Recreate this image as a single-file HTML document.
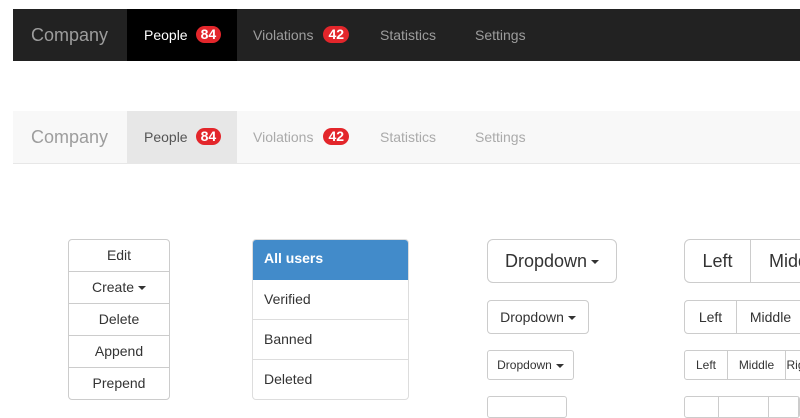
<!DOCTYPE html>
<html><head><style>
*{box-sizing:border-box;margin:0;padding:0}
body{width:800px;height:400px;overflow:hidden;background:#fff;font-family:"Liberation Sans",Arial,sans-serif;position:relative;color:#333}
.nav{position:absolute;left:13px;width:800px;height:52px}
.nav span{position:absolute;top:0;height:52px;line-height:52px;font-size:14px}
.brand{font-size:18px!important}
.badge{display:inline-block;background:#e3262b;color:#fff;font-size:12px;font-weight:bold;border-radius:10px;height:17px;line-height:17px;padding:0 5px;vertical-align:1px;margin-left:8px}
.b{position:absolute;border:1px solid #ccc;border-radius:4px;background:#fff;color:#333;text-align:center;white-space:nowrap}
.caret{display:inline-block;width:0;height:0;border-left:4px solid transparent;border-right:4px solid transparent;border-top:4px solid #333;vertical-align:middle;margin-left:4px}
.vg div{height:32px;line-height:31px;font-size:14px;text-align:center;border-bottom:1px solid #ccc}
.lg div{height:40px;line-height:39px;font-size:14px;padding-left:11px;border-bottom:1px solid #ddd}
.grp{position:absolute;border:1px solid #ccc;border-radius:4px;display:flex;overflow:hidden}
.grp div{border-right:1px solid #ccc;text-align:center}
</style></head><body>
<div class="nav" style="top:9px;background:#222">
<span class="brand" style="left:18px;color:#9d9d9d">Company</span>
<span style="left:114px;width:110px;background:#000;color:#fff;padding-left:17px">People<span class="badge" style="position:static;line-height:17px;height:17px">84</span></span>
<span style="left:240px;color:#9d9d9d">Violations<span class="badge" style="position:static;line-height:17px;height:17px;margin-left:10px">42</span></span>
<span style="left:367px;color:#9d9d9d">Statistics</span>
<span style="left:462px;color:#9d9d9d">Settings</span>
</div>
<div class="nav" style="top:111px;background:#f8f8f8;border-bottom:1px solid #e7e7e7;height:53px">
<span class="brand" style="left:18px;color:#9d9d9d">Company</span>
<span style="left:114px;width:110px;background:#e7e7e7;color:#555;padding-left:17px">People<span class="badge" style="position:static;line-height:17px;height:17px">84</span></span>
<span style="left:240px;color:#aaa">Violations<span class="badge" style="position:static;line-height:17px;height:17px;margin-left:10px">42</span></span>
<span style="left:367px;color:#aaa">Statistics</span>
<span style="left:462px;color:#aaa">Settings</span>
</div>
<div class="b vg" style="left:68px;top:239px;width:102px;height:161px;overflow:hidden;text-align:center">
<div>Edit</div><div>Create<span class="caret"></span></div><div>Delete</div><div>Append</div><div style="border:0">Prepend</div></div>
<div class="b lg" style="left:252px;top:239px;width:157px;height:161px;overflow:hidden;text-align:left;border-color:#ddd">
<div style="background:#428bca;color:#fff;font-weight:bold;border-color:#428bca;margin:-1px -1px 0;padding-left:12px;height:41px">All users</div><div>Verified</div><div>Banned</div><div style="border:0">Deleted</div></div>
<div class="b" style="left:487px;top:239px;width:130px;height:44px;line-height:42px;font-size:18px;border-radius:6px">Dropdown<span class="caret"></span></div>
<div class="b" style="left:487px;top:300px;width:102px;height:34px;line-height:32px;font-size:14px">Dropdown<span class="caret"></span></div>
<div class="b" style="left:487px;top:350px;width:87px;height:30px;line-height:28px;font-size:12px;border-radius:3px">Dropdown<span class="caret"></span></div>
<div class="b" style="left:487px;top:396px;width:80px;height:22px;border-radius:3px"></div>
<div class="grp" style="left:684px;top:239px;height:44px;font-size:18px;line-height:42px;border-radius:6px"><div style="width:66px">Left</div><div style="width:90px">Middle</div></div>
<div class="grp" style="left:684px;top:300px;height:34px;font-size:14px;line-height:32px"><div style="width:52px">Left</div><div style="width:68px">Middle</div></div>
<div class="grp" style="left:684px;top:350px;height:30px;font-size:12px;line-height:28px;border-radius:3px"><div style="width:43px">Left</div><div style="width:58px">Middle</div><div style="width:30px">Right</div></div>
<div class="grp" style="left:684px;top:396px;height:22px;border-radius:3px"><div style="width:34px"></div><div style="width:50px"></div><div style="width:30px"></div></div>
</body></html>
